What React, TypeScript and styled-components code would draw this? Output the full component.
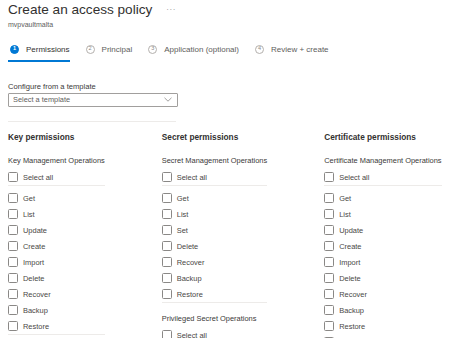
import React from 'react';
import styled, { createGlobalStyle } from 'styled-components';

const Global = createGlobalStyle`
  html, body { margin: 0; padding: 0; background: #ffffff; }
  body {
    font-family: "Liberation Sans", Arial, sans-serif;
    color: #323130;
    -webkit-font-smoothing: antialiased;
  }
`;

const Page = styled.div`
  box-sizing: border-box;
  width: 474px;
  height: 338px;
  overflow: hidden;
  padding: 1px 0 0 8px;
`;

const TitleRow = styled.div`
  display: flex;
  align-items: center;
  height: 18px;
`;

const Title = styled.h1`
  margin: 0;
  font-size: 13.6px;
  line-height: 18px;
  font-weight: 400;
  color: #323130;
  white-space: nowrap;
`;

const More = styled.span`
  margin-left: 14px;
  font-size: 8px;
  letter-spacing: 0.5px;
  color: #8a8886;
  line-height: 18px;
`;

const Subtitle = styled.div`
  margin-top: 1px;
  font-size: 7px;
  line-height: 9px;
  color: #605e5c;
`;

const Tabs = styled.div`
  display: flex;
  gap: 14px;
  margin-top: 9px;
`;

const Tab = styled.div<{ $active?: boolean }>`
  display: flex;
  align-items: center;
  gap: 7px;
  height: 22px;
  padding-left: 2px;
  border-bottom: 2px solid ${(p) => (p.$active ? '#0078d4' : 'transparent')};
  font-size: 8px;
  color: ${(p) => (p.$active ? '#323130' : '#605e5c')};
  white-space: nowrap;
`;

const StepCircle = styled.span<{ $active?: boolean }>`
  box-sizing: border-box;
  width: 9px;
  height: 9px;
  border-radius: 50%;
  border: 1px solid ${(p) => (p.$active ? '#0078d4' : '#b3b0ad')};
  background: ${(p) => (p.$active ? '#0078d4' : '#ffffff')};
  color: ${(p) => (p.$active ? '#ffffff' : '#8a8886')};
  font-size: 5.5px;
  font-weight: ${(p) => (p.$active ? 700 : 400)};
  display: flex;
  align-items: center;
  justify-content: center;
  line-height: 1;
`;

const FieldLabel = styled.div`
  margin-top: 20px;
  font-size: 7.6px;
  line-height: 10px;
  color: #3b3a39;
`;

const Select = styled.div`
  box-sizing: border-box;
  margin-top: 1px;
  width: 170px;
  height: 13.5px;
  border: 1px solid #a19f9d;
  border-radius: 1px;
  display: flex;
  align-items: center;
  justify-content: space-between;
  padding: 0 5px 0 4px;
  font-size: 7.4px;
  color: #605e5c;
`;

const Divider = styled.div`
  margin-top: 14.5px;
  width: 168px;
  height: 1px;
  background: #edebe9;
`;

const Columns = styled.div`
  display: flex;
  gap: 57px;
  margin-top: 9px;
  align-items: flex-start;
`;

const Column = styled.section`
  display: flex;
  flex-direction: column;
  flex: none;
`;

const SectionTitle = styled.h2`
  margin: 0;
  font-size: 8.3px;
  line-height: 12px;
  font-weight: 700;
  color: #323130;
  white-space: nowrap;
`;

const GroupLabel = styled.div<{ $gap: number }>`
  margin-top: ${(p) => p.$gap}px;
  margin-bottom: 3px;
  font-size: 7.45px;
  line-height: 10px;
  color: #3b3a39;
  white-space: nowrap;
`;

const CheckRow = styled.label<{ $spaced?: boolean }>`
  display: flex;
  align-items: center;
  gap: 5px;
  height: 16px;
  margin-top: ${(p) => (p.$spaced ? 4 : 0)}px;
  font-size: 7.45px;
  color: #4a4846;
  white-space: nowrap;
`;

const Box = styled.span`
  box-sizing: border-box;
  width: 10px;
  height: 10px;
  border: 1px solid #8a8886;
  border-radius: 1.5px;
  background: #ffffff;
  flex: none;
`;

const RowDivider = styled.div`
  height: 1px;
  background: #edebe9;
`;

type Group = { label: string; items: string[]; gap: number };

const Chevron = () => (
  <svg width="8" height="5" viewBox="0 0 8 5" fill="none">
    <path d="M0.5 0.8 L4 4.2 L7.5 0.8" stroke="#8a8886" strokeWidth="0.8" />
  </svg>
);

const Check = ({ label, spaced }: { label: string; spaced?: boolean }) => (
  <CheckRow $spaced={spaced}>
    <Box />
    {label}
  </CheckRow>
);

const GroupBlock = ({ group }: { group: Group }) => (
  <>
    <GroupLabel $gap={group.gap}>{group.label}</GroupLabel>
    <Check label="Select all" />
    <RowDivider />
    {group.items.map((it, i) => (
      <Check key={it} label={it} spaced={i === 0} />
    ))}
    <RowDivider />
  </>
);

const columns: { title: string; groups: Group[] }[] = [
  {
    title: 'Key permissions',
    groups: [
      {
        label: 'Key Management Operations',
        gap: 13,
        items: ['Get', 'List', 'Update', 'Create', 'Import', 'Delete', 'Recover', 'Backup', 'Restore'],
      },
    ],
  },
  {
    title: 'Secret permissions',
    groups: [
      {
        label: 'Secret Management Operations',
        gap: 13,
        items: ['Get', 'List', 'Set', 'Delete', 'Recover', 'Backup', 'Restore'],
      },
      {
        label: 'Privileged Secret Operations',
        gap: 11,
        items: [],
      },
    ],
  },
  {
    title: 'Certificate permissions',
    groups: [
      {
        label: 'Certificate Management Operations',
        gap: 13,
        items: ['Get', 'List', 'Update', 'Create', 'Import', 'Delete', 'Recover', 'Backup', 'Restore', 'Manage Contacts'],
      },
    ],
  },
];

const steps = ['Permissions', 'Principal', 'Application (optional)', 'Review + create'];

export default function App() {
  return (
    <>
      <Global />
      <Page>
        <TitleRow>
          <Title>Create an access policy</Title>
          <More>···</More>
        </TitleRow>
        <Subtitle>mvpvaultmalta</Subtitle>
        <Tabs>
          {steps.map((s, i) => (
            <Tab key={s} $active={i === 0}>
              <StepCircle $active={i === 0}>{i + 1}</StepCircle>
              {s}
            </Tab>
          ))}
        </Tabs>
        <FieldLabel>Configure from a template</FieldLabel>
        <Select>
          <span>Select a template</span>
          <Chevron />
        </Select>
        <Divider />
        <Columns>
          {columns.map((c) => (
            <Column key={c.title}>
              <SectionTitle>{c.title}</SectionTitle>
              {c.groups.map((g) => (
                <GroupBlock key={g.label} group={g} />
              ))}
            </Column>
          ))}
        </Columns>
      </Page>
    </>
  );
}
